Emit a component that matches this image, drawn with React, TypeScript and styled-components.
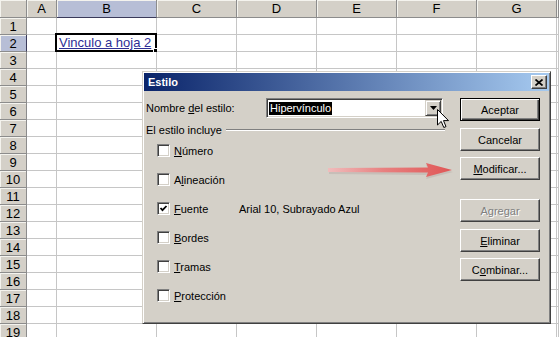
import React from 'react'
import styled, { createGlobalStyle, css } from 'styled-components'

const GlobalStyle = createGlobalStyle`
  html, body {
    margin: 0;
    padding: 0;
    background: #fff;
    overflow: hidden;
  }
  body {
    font-family: 'Liberation Sans', Arial, sans-serif;
  }
`

const COLUMNS = ['A', 'B', 'C', 'D', 'E', 'F', 'G']
const ROW_COUNT = 19
const ACTIVE_COL = 'B'
const ACTIVE_ROW = 2

const STYLE_PARTS = [
  { key: 'N', rest: 'úmero', checked: false },
  { pre: 'A', key: 'l', rest: 'ineación', checked: false },
  { key: 'F', rest: 'uente', checked: true, info: 'Arial 10, Subrayado Azul' },
  { key: 'B', rest: 'ordes', checked: false },
  { key: 'T', rest: 'ramas', checked: false },
  { key: 'P', rest: 'rotección', checked: false },
]

const Screen = styled.div`
  position: relative;
  width: 559px;
  height: 337px;
  overflow: hidden;
`

const Sheet = styled.div`
  display: grid;
  grid-template-columns: 27px 30px 100px repeat(5, 80px) 1fr;
  grid-template-rows: 18px;
  grid-auto-rows: 17px;
  font-family: 'Liberation Sans', Arial, sans-serif;
  font-size: 13px;
  color: #000;
`

const HeaderCell = styled.div<{ $active?: boolean }>`
  box-sizing: border-box;
  display: flex;
  align-items: center;
  justify-content: center;
  background: ${(p) => (p.$active ? '#b7bed6' : '#d4d0c8')};
  border-right: 1px solid #8c8c8c;
  border-bottom: 1px solid ${(p) => (p.$active ? '#3a3a5a' : '#8c8c8c')};
  box-shadow: inset 1px 1px #f4f3ee;
  line-height: 1;
`

const RowHeader = styled(HeaderCell)`
  border-bottom-color: #8c8c8c;
  border-right-color: ${(p) => (p.$active ? '#3a3a5a' : '#8c8c8c')};
`

const Cell = styled.div`
  position: relative;
  box-sizing: border-box;
  background: #fff;
  border-right: 1px solid #c6c6c6;
  border-bottom: 1px solid #c6c6c6;
`

const LinkCell = styled(Cell)`
  display: flex;
  align-items: flex-end;
  padding: 0 0 1px 2px;
  color: #2e2e96;
  text-decoration: underline;
  white-space: nowrap;
`

const Selection = styled.div`
  position: absolute;
  left: -2px;
  top: -2px;
  right: -1px;
  bottom: -1px;
  border: 2px solid #000;
`

const FillHandle = styled.div`
  position: absolute;
  right: -3px;
  bottom: -3px;
  width: 5px;
  height: 5px;
  background: #000;
  border: 1px solid #fff;
  border-right: none;
  border-bottom: none;
`

const Dialog = styled.div`
  position: absolute;
  left: 142px;
  top: 71px;
  width: 409px;
  height: 253px;
  box-sizing: border-box;
  padding: 1px;
  display: flex;
  flex-direction: column;
  background: #d4d0c8;
  border: 1px solid;
  border-color: #d4d0c8 #404040 #404040 #d4d0c8;
  box-shadow: inset 1px 1px #fff, inset -1px -1px #808080;
  font-family: 'Liberation Sans', Arial, sans-serif;
  font-size: 11px;
  color: #000;
`

const TitleBar = styled.div`
  height: 18px;
  flex: none;
  display: flex;
  align-items: center;
  justify-content: space-between;
  padding: 0 2px 0 4px;
  background: linear-gradient(to right, #0a246a, #a6caf0);
  color: #fff;
  font-weight: bold;
  font-size: 11px;
`

const CloseButton = styled.div`
  box-sizing: border-box;
  width: 16px;
  height: 14px;
  display: flex;
  align-items: center;
  justify-content: center;
  background: #d4d0c8;
  border: 1px solid;
  border-color: #fff #404040 #404040 #fff;
  box-shadow: inset -1px -1px #808080;
`

const Body = styled.div`
  flex: 1;
  display: flex;
`

const LeftPane = styled.div`
  width: 316px;
  display: flex;
  flex-direction: column;
`

const NameRow = styled.div`
  margin-top: 7px;
  height: 20px;
  display: flex;
  align-items: center;
`

const NameLabel = styled.span`
  width: 122px;
  padding-left: 2px;
  box-sizing: border-box;
`

const Combo = styled.div`
  box-sizing: border-box;
  width: 177px;
  height: 20px;
  display: flex;
  align-items: center;
  justify-content: space-between;
  padding: 0 0 0 1px;
  background: #fff;
  border: 1px solid;
  border-color: #808080 #fff #fff #808080;
  box-shadow: inset 1px 1px #404040, inset -1px -1px #d4d0c8;
`

const ComboValue = styled.span`
  margin-left: 1px;
  height: 13px;
  line-height: 13px;
  padding: 0 1px;
  background: #000;
  color: #fff;
`

const DropButton = styled.div`
  box-sizing: border-box;
  width: 16px;
  height: 16px;
  margin-right: 1px;
  display: flex;
  align-items: center;
  justify-content: center;
  background: #d4d0c8;
  border: 1px solid;
  border-color: #d4d0c8 #404040 #404040 #d4d0c8;
  box-shadow: inset 1px 1px #fff, inset -1px -1px #808080;
`

const SectionRow = styled.div`
  margin-top: 5px;
  height: 13px;
  display: flex;
  align-items: center;
  padding-left: 2px;
`

const EtchedLine = styled.div`
  flex: 1;
  margin: 0 15px 0 4px;
  border-top: 1px solid #808080;
  border-bottom: 1px solid #fff;
`

const CheckList = styled.div`
  display: flex;
  flex-direction: column;
`

const CheckItem = styled.div`
  height: 29px;
  display: flex;
  align-items: center;
  padding-left: 13px;
`

const CheckBox = styled.span`
  box-sizing: border-box;
  width: 13px;
  height: 13px;
  margin-right: 4px;
  display: flex;
  align-items: center;
  justify-content: center;
  background: #fff;
  border: 1px solid;
  border-color: #808080 #fff #fff #808080;
  box-shadow: inset 1px 1px #404040, inset -1px -1px #d4d0c8;
`

const CheckLabel = styled.span`
  width: 65px;
`

const ButtonColumn = styled.div`
  width: 80px;
  padding-top: 7px;
  display: flex;
  flex-direction: column;
`

const Button = styled.button<{ $default?: boolean; $space: number }>`
  box-sizing: border-box;
  width: 80px;
  height: 23px;
  margin: ${(p) => p.$space}px 0 0;
  padding: 0;
  font: 11px 'Liberation Sans', Arial, sans-serif;
  color: #000;
  background: #d4d0c8;
  border: 1px solid;
  border-color: #fff #404040 #404040 #fff;
  box-shadow: inset -1px -1px #808080;
  ${(p) =>
    p.$default &&
    css`
      border-color: #000;
      box-shadow: inset 1px 1px #fff, inset -1px -1px #404040,
        inset -2px -2px #808080;
    `}
  &:disabled {
    color: #808080;
    text-shadow: 1px 1px #fff;
  }
`

const Overlay = styled.svg<{ $x: number; $y: number }>`
  position: absolute;
  left: ${(p) => p.$x}px;
  top: ${(p) => p.$y}px;
  overflow: visible;
`

const CloseGlyph = () => (
  <svg width="8" height="7" viewBox="0 0 8 7">
    <path d="M0.5 0.5 L7.5 6.5 M7.5 0.5 L0.5 6.5" stroke="#000" strokeWidth="1.7" />
  </svg>
)

const DownGlyph = () => (
  <svg width="7" height="4" viewBox="0 0 7 4">
    <path d="M0 0 H7 L3.5 4 Z" fill="#000" />
  </svg>
)

const CheckGlyph = () => (
  <svg width="9" height="9" viewBox="0 0 9 9">
    <polyline points="1.5,4 3.5,6.2 7.5,2" fill="none" stroke="#000" strokeWidth="1.8" />
  </svg>
)

const RedArrow = () => (
  <Overlay $x={326} $y={160} width="130" height="22" viewBox="0 0 130 22">
    <defs>
      <linearGradient id="arrowFill" x1="0" x2="1" y1="0" y2="0">
        <stop offset="0" stopColor="#f0bcbc" />
        <stop offset="0.45" stopColor="#e88080" />
        <stop offset="1" stopColor="#e05656" />
      </linearGradient>
    </defs>
    <path d="M3 10 L102 9 L100 5 L127 12 L100 19 L102 15 L3 14 Z" fill="#b8a8a4" opacity="0.45" />
    <path d="M2 8 L102 7.5 L100 3 L126 10 L100 17 L102 12.5 L2 12 Z" fill="url(#arrowFill)" />
  </Overlay>
)

const Pointer = () => (
  <Overlay $x={437} $y={109} width="13" height="20" viewBox="0 0 13 20">
    <path
      d="M0.5 0.5 L0.5 16 L4.2 12.4 L6.8 18.5 L9 17.6 L6.5 11.6 L11.5 11.6 Z"
      fill="#fff"
      stroke="#000"
      strokeWidth="1"
      strokeLinejoin="miter"
    />
  </Overlay>
)

const Spreadsheet = () => (
  <Sheet>
    <HeaderCell />
    {COLUMNS.map((c) => (
      <HeaderCell key={c} $active={c === ACTIVE_COL}>
        {c}
      </HeaderCell>
    ))}
    <HeaderCell />
    {Array.from({ length: ROW_COUNT }, (_, i) => i + 1).map((row) => (
      <React.Fragment key={row}>
        <RowHeader $active={row === ACTIVE_ROW}>{row}</RowHeader>
        {COLUMNS.map((c) =>
          row === ACTIVE_ROW && c === ACTIVE_COL ? (
            <LinkCell key={c}>
              Vinculo a hoja 2
              <Selection />
              <FillHandle />
            </LinkCell>
          ) : (
            <Cell key={c} />
          ),
        )}
        <Cell />
      </React.Fragment>
    ))}
  </Sheet>
)

const StyleDialog = () => (
  <Dialog>
    <TitleBar>
      <span>Estilo</span>
      <CloseButton>
        <CloseGlyph />
      </CloseButton>
    </TitleBar>
    <Body>
      <LeftPane>
        <NameRow>
          <NameLabel>
            Nombre <u>d</u>el estilo:
          </NameLabel>
          <Combo>
            <ComboValue>Hipervínculo</ComboValue>
            <DropButton>
              <DownGlyph />
            </DropButton>
          </Combo>
        </NameRow>
        <SectionRow>
          <span>El estilo incluye</span>
          <EtchedLine />
        </SectionRow>
        <CheckList>
          {STYLE_PARTS.map((part) => (
            <CheckItem key={part.rest}>
              <CheckBox>{part.checked && <CheckGlyph />}</CheckBox>
              <CheckLabel>
                {part.pre}
                <u>{part.key}</u>
                {part.rest}
              </CheckLabel>
              {part.info && <span>{part.info}</span>}
            </CheckItem>
          ))}
        </CheckList>
      </LeftPane>
      <ButtonColumn>
        <Button $default $space={0}>
          Aceptar
        </Button>
        <Button $space={7}>Cancelar</Button>
        <Button $space={6}>
          <u>M</u>odificar...
        </Button>
        <Button $space={19} disabled>
          Agregar
        </Button>
        <Button $space={7}>
          <u>E</u>liminar
        </Button>
        <Button $space={6}>
          C<u>o</u>mbinar...
        </Button>
      </ButtonColumn>
    </Body>
  </Dialog>
)

export default function App() {
  return (
    <>
      <GlobalStyle />
      <Screen>
        <Spreadsheet />
        <StyleDialog />
        <RedArrow />
        <Pointer />
      </Screen>
    </>
  )
}
